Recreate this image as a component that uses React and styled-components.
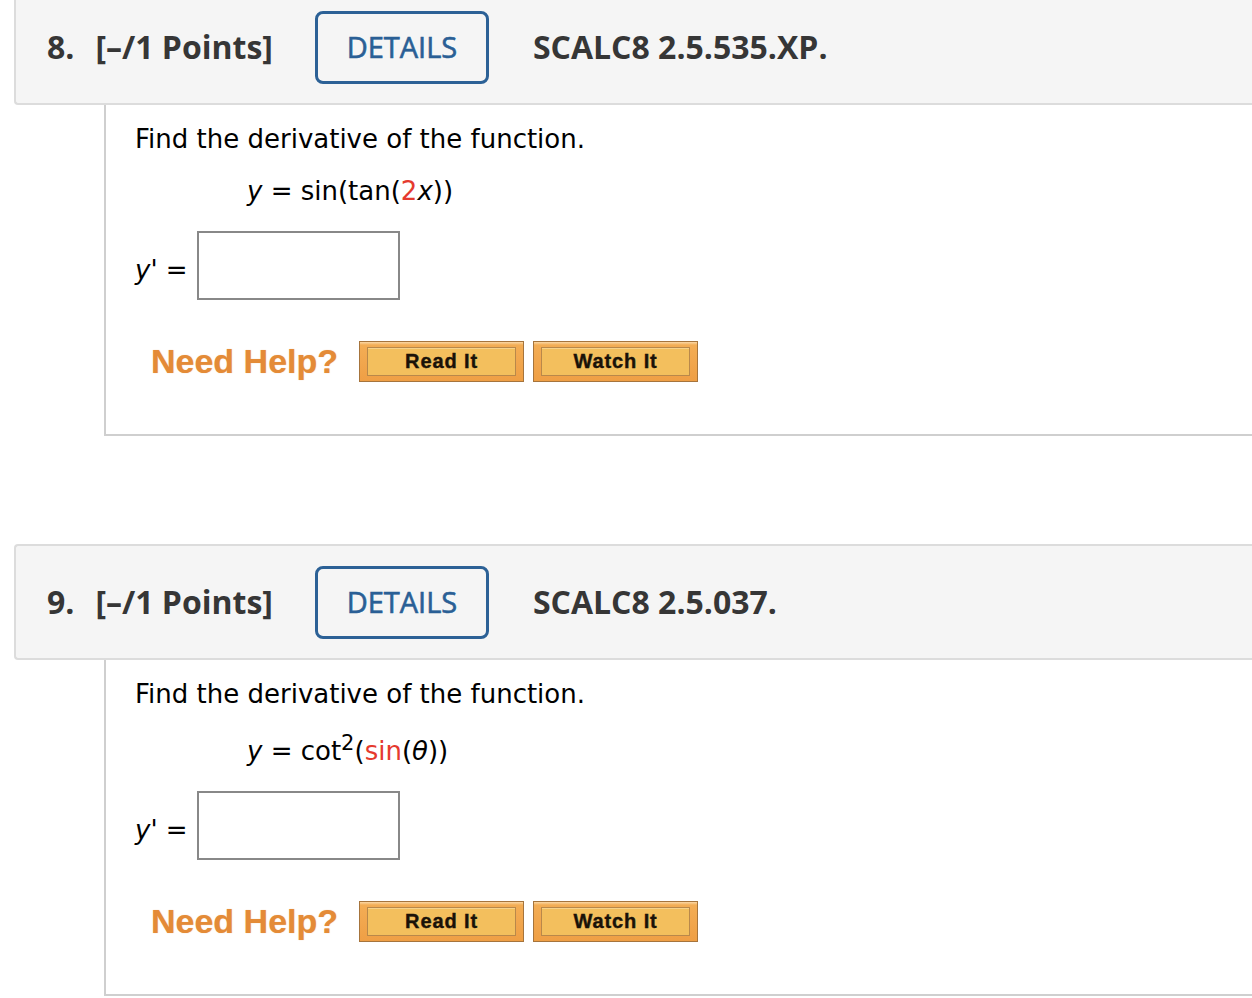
import React from "react";
import styled, { createGlobalStyle } from "styled-components";

const Global = createGlobalStyle`
  html, body { margin: 0; padding: 0; background: #fff; overflow: hidden; }
  body { width: 1252px; height: 998px; }
`;

const Page = styled.div`
  padding-left: 14px;
  margin-top: -11px;
  width: 1300px;
`;

const Question = styled.section`
  margin-bottom: 108px;
`;

const Header = styled.div`
  box-sizing: border-box;
  height: 116px;
  display: flex;
  align-items: center;
  padding-left: 31px;
  background: #f5f5f5;
  border: 2px solid #dcdcdc;
  border-right: none;
  border-radius: 4px 0 0 4px;
  font-family: "Open Sans", "Liberation Sans", sans-serif;
  color: #363636;
`;

const Num = styled.span`
  font-size: 32px;
  font-weight: 700;
  margin-right: 21px;
  margin-top: -1px;
`;

const Points = styled.span`
  font-size: 32px;
  font-weight: 700;
  margin-right: 42px;
  margin-top: -1px;
`;

const DetailsButton = styled.button`
  box-sizing: border-box;
  width: 174px;
  height: 73px;
  border: 3px solid #2c6196;
  border-radius: 8px;
  background: transparent;
  color: #2a5f95;
  font-family: "Open Sans", "Liberation Sans", sans-serif;
  font-size: 29px;
  font-weight: 500;
  padding: 0 0 2px 0;
  margin-right: 44px;
  -webkit-text-stroke: 0.6px #2a5f95;
`;

const Code = styled.span`
  font-size: 32px;
  font-weight: 700;
  margin-top: -1px;
`;

const Body = styled.div`
  margin-left: 90px;
  border-left: 2px solid #cfcfcf;
  border-bottom: 2px solid #cfcfcf;
  padding: 19px 0 52px 29px;
  font-family: "DejaVu Sans", Verdana, sans-serif;
  font-size: 26px;
  color: #000;
`;

const Prompt = styled.div`
  line-height: 30px;
  height: 30px;
`;

const Equation = styled.div`
  margin-top: 22px;
  padding-left: 112px;
  line-height: 30px;
`;

const Var = styled.i`
  font-style: italic;
`;

const Red = styled.span`
  color: #e53a2e;
`;

const Sup = styled.sup`
  font-size: 21px;
  vertical-align: 10px;
  line-height: normal;
`;

const AnswerRow = styled.div`
  margin-top: 25px;
  display: flex;
  align-items: flex-end;
`;

const AnswerLabel = styled.span`
  display: inline-block;
  width: 62px;
  line-height: 30px;
  margin-bottom: 15px;
`;

const AnswerBox = styled.div`
  box-sizing: border-box;
  width: 203px;
  height: 69px;
  border: 2px solid #888;
  background: #fff;
`;

const HelpRow = styled.div`
  margin-top: 41px;
  padding-left: 16px;
  display: flex;
  align-items: center;
`;

const HelpText = styled.span`
  font-family: "Liberation Sans", Arial, sans-serif;
  font-weight: 700;
  font-size: 34px;
  color: #e48b37;
  margin-right: 21px;
  text-shadow: 0 0 1px rgba(228, 139, 55, 0.6);
`;

const HelpButton = styled.div`
  box-sizing: border-box;
  width: 165px;
  height: 41px;
  margin-right: 9px;
  padding: 5px 7px 5px 7px;
  border: 1px solid #a6743c;
  background: linear-gradient(#fbd8a6 0px, #f3ad55 3px, #ef9f45 100%);
  display: flex;
`;

const HelpInner = styled.div`
  flex: 1;
  display: flex;
  align-items: center;
  justify-content: center;
  border: 1px solid #b9884a;
  background: #f3bf5d;
  box-shadow: inset 0 1px 0 #f7d28a;
  font-family: "Liberation Sans", Arial, sans-serif;
  font-weight: 700;
  font-size: 20px;
  letter-spacing: 0.9px;
  color: #1a1208;
  -webkit-text-stroke: 0.4px #1a1208;
`;

const questions = [
  {
    n: "8.",
    code: "SCALC8 2.5.535.XP.",
    eq: (
      <>
        <Var>y</Var> = sin(tan(<Red>2</Red>
        <Var>x</Var>))
      </>
    ),
  },
  {
    n: "9.",
    code: "SCALC8 2.5.037.",
    eq: (
      <>
        <Var>y</Var> = cot<Sup>2</Sup>(<Red>sin</Red>(<Var>θ</Var>))
      </>
    ),
  },
];

export default function App() {
  return (
    <>
      <Global />
      <Page>
        {questions.map((q) => (
          <Question key={q.n}>
            <Header>
              <Num>{q.n}</Num>
              <Points>[–/1 Points]</Points>
              <DetailsButton>DETAILS</DetailsButton>
              <Code>{q.code}</Code>
            </Header>
            <Body>
              <Prompt>Find the derivative of the function.</Prompt>
              <Equation>{q.eq}</Equation>
              <AnswerRow>
                <AnswerLabel>
                  <Var>y</Var>' =
                </AnswerLabel>
                <AnswerBox />
              </AnswerRow>
              <HelpRow>
                <HelpText>Need Help?</HelpText>
                <HelpButton>
                  <HelpInner>Read It</HelpInner>
                </HelpButton>
                <HelpButton>
                  <HelpInner>Watch It</HelpInner>
                </HelpButton>
              </HelpRow>
            </Body>
          </Question>
        ))}
      </Page>
    </>
  );
}
